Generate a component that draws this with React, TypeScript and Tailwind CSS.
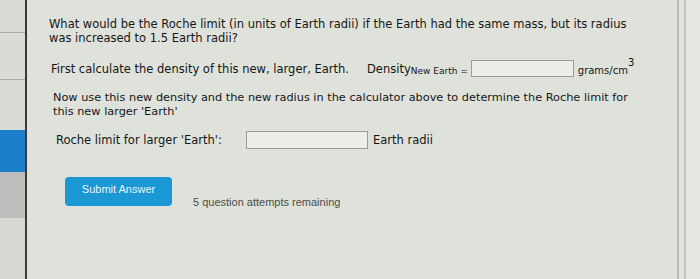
export default function App() {
  return (
    <div className="flex h-[279px] w-[700px] overflow-hidden bg-[#e2e4df] font-['DejaVu_Sans',sans-serif] text-[#161616]">
      {/* left nav strip */}
      <div className="flex w-[27px] shrink-0 flex-col border-r-2 border-[#3a3a3a] bg-[#d9dbd7]">
        <div className="h-[33px] border-b border-[#a9aaa6]" />
        <div className="h-[47px] border-b border-[#a9aaa6]" />
        <div className="h-[50px]" />
        <div className="h-[42px] bg-[#1a7fc8]" />
        <div className="h-[46px] bg-[#bdbebb]" />
        <div className="flex-1 bg-[#d7d9d5]" />
      </div>

      {/* question panel */}
      <div className="w-[652px] shrink-0 border-r-2 border-[#b9bbb7] bg-[#dee2db] pt-[17px] text-[11.5px] leading-[14px]">
        <p className="pl-[22px]">
          What would be the Roche limit (in units of Earth radii) if the Earth had the same mass, but its radius
          <br />
          was increased to 1.5 Earth radii?
        </p>

        <div className="mt-[14px] flex items-center pl-[24px]">
          <span>First calculate the density of this new, larger, Earth.</span>
          <span className="ml-[18px]">Density</span>
          <span className="mt-[5px] text-[9px]">New Earth =</span>
          <span className="ml-[3px] h-[17px] w-[103px] border border-[#9a9c98] bg-[#eceeea]" />
          <span className="ml-[4px] mt-[4px] text-[10px]">grams/cm</span>
          <span className="-mt-[12px] text-[10px]">3</span>
        </div>

        <p className="mt-[13px] pl-[26px] text-[11.3px]">
          Now use this new density and the new radius in the calculator above to determine the Roche limit for
          <br />
          this new larger 'Earth'
        </p>

        <div className="mt-[12px] flex items-center pl-[29px]">
          <span className="w-[190px]">Roche limit for larger 'Earth':</span>
          <span className="h-[18px] w-[122px] border border-[#9a9c98] bg-[#eceeea]" />
          <span className="ml-[5px]">Earth radii</span>
        </div>

        <div className="mt-[28px] flex items-start pl-[38px] font-['Liberation_Sans',sans-serif]">
          <button
            type="button"
            className="h-[29px] w-[107px] rounded-[4px] bg-[#1b97d3] pb-[5px] text-[11px] text-[#e8f4fb]"
          >
            Submit Answer
          </button>
          <span className="ml-[21px] mt-[18px] text-[11px] text-[#4a4c4a]">5 question attempts remaining</span>
        </div>
      </div>

      <div className="ml-[5px] w-[2px] shrink-0 bg-[#c4c6c2]" />
      <div className="flex-1 bg-[#e6e7e3]" />
    </div>
  )
}
